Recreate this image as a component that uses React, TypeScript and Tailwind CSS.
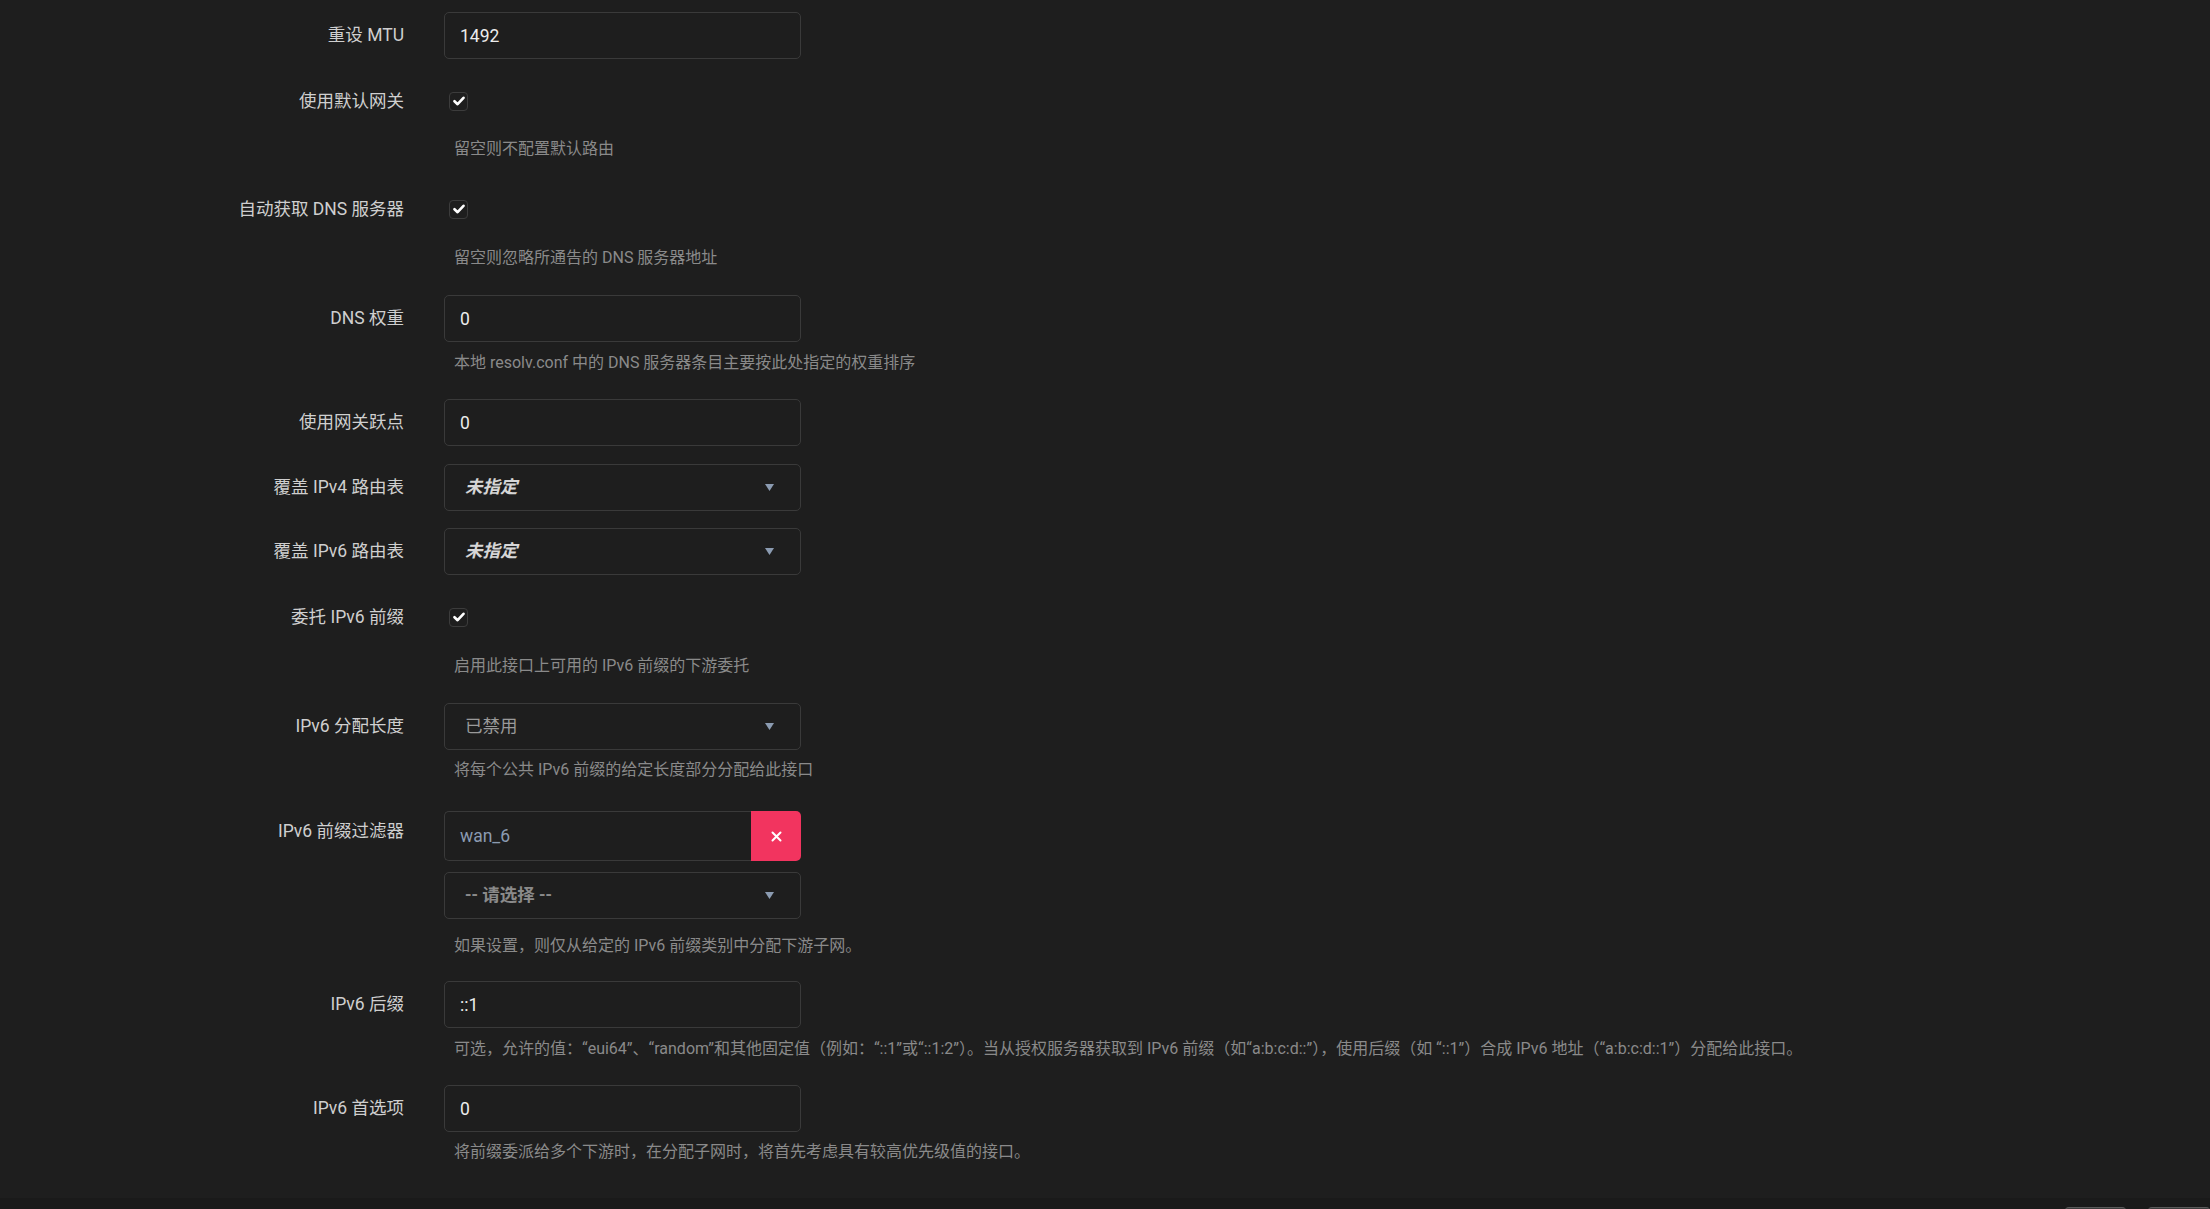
import React from 'react';

const font = "font-['Roboto','Noto_Sans_CJK_SC',sans-serif]";

function Row({ label, className, labelH, children }: { label: string; className: string; labelH?: string; children: React.ReactNode }) {
  return (
    <div className={`flex items-start ${className}`}>
      <div className={`w-[404px] shrink-0 flex items-center justify-end text-[17.5px] text-[#cfcfcf] whitespace-nowrap ${labelH ?? 'h-[47px]'}`}>
        {label}
      </div>
      <div className="ml-[40px] flex flex-col">{children}</div>
    </div>
  );
}

function TextBox({ value, h }: { value: string; h?: string }) {
  return (
    <input
      readOnly
      defaultValue={value}
      className={`w-[357px] ${h ?? 'h-[47px]'} rounded-[5px] border border-[#3a3a3a] bg-[#1e1e1e] pl-[15px] text-[17.5px] text-[#ececec] outline-none ${font}`}
    />
  );
}

function Arrow() {
  return (
    <svg width="9" height="7" viewBox="0 0 9 7">
      <path d="M0 0 H9 L4.5 7 Z" fill="#8b9bb1" />
    </svg>
  );
}

function SelectBox({ text, textClass }: { text: string; textClass: string }) {
  return (
    <div className="w-[357px] h-[47px] rounded-[5px] border border-[#3a3a3a] flex items-center justify-between pl-[20px] pr-[26px]">
      <span className={`text-[17.5px] ${textClass}`}>{text}</span>
      <Arrow />
    </div>
  );
}

function Check() {
  return (
    <div className="h-[48px] flex items-center">
      <div className="ml-[5px] w-[19px] h-[19px] rounded-[4px] border border-[#3c3c3c] flex items-center justify-center">
        <svg width="12" height="10" viewBox="0 0 12 10">
          <path d="M1.5 5.2 L4.6 8.2 L10.5 1.8" stroke="#ffffff" strokeWidth="2.6" fill="none" strokeLinecap="round" strokeLinejoin="round" />
        </svg>
      </div>
    </div>
  );
}

function Help({ children, className }: { children: React.ReactNode; className: string }) {
  return <div className={`pl-[10px] text-[16px] leading-[24px] text-[#8a8a8a] whitespace-nowrap ${className}`}>{children}</div>;
}

export default function App() {
  return (
    <div className={`min-h-screen bg-[#1e1e1e] ${font}`}>
      <div className="pt-[12px] pb-[34px]">
        <Row label="重设 MTU" className="">
          <TextBox value="1492" />
        </Row>

        <Row label="使用默认网关" className="mt-[18px]" labelH="h-[48px]">
          <Check />
          <Help className="mt-[12px]">留空则不配置默认路由</Help>
        </Row>

        <Row label="自动获取 DNS 服务器" className="mt-[24px]" labelH="h-[48px]">
          <Check />
          <Help className="mt-[13px]">留空则忽略所通告的 DNS 服务器地址</Help>
        </Row>

        <Row label="DNS 权重" className="mt-[25px]">
          <TextBox value="0" />
          <Help className="mt-[9px]">本地 resolv.conf 中的 DNS 服务器条目主要按此处指定的权重排序</Help>
        </Row>

        <Row label="使用网关跃点" className="mt-[24px]">
          <TextBox value="0" />
        </Row>

        <Row label="覆盖 IPv4 路由表" className="mt-[18px]">
          <SelectBox text="未指定" textClass="font-bold italic text-[#d6d6d6]" />
        </Row>

        <Row label="覆盖 IPv6 路由表" className="mt-[17px]">
          <SelectBox text="未指定" textClass="font-bold italic text-[#d6d6d6]" />
        </Row>

        <Row label="委托 IPv6 前缀" className="mt-[18px]" labelH="h-[48px]">
          <Check />
          <Help className="mt-[13px]">启用此接口上可用的 IPv6 前缀的下游委托</Help>
        </Row>

        <Row label="IPv6 分配长度" className="mt-[25px]">
          <SelectBox text="已禁用" textClass="text-[#9a9a9a]" />
          <Help className="mt-[8px]">将每个公共 IPv6 前缀的给定长度部分分配给此接口</Help>
        </Row>

        <Row label="IPv6 前缀过滤器" className="mt-[29px]" labelH="h-[40px]">
          <div className="flex w-[357px] h-[50px]">
            <div className="flex-1 rounded-l-[5px] border border-r-0 border-[#3a3a3a] flex items-center pl-[15px] text-[17.5px] text-[#8b9bb1]">
              wan_6
            </div>
            <div className="w-[50px] rounded-r-[5px] bg-[#f2345f] flex items-center justify-center">
              <svg width="11" height="11" viewBox="0 0 11 11">
                <path d="M1.5 1.5 L9.5 9.5 M9.5 1.5 L1.5 9.5" stroke="#ffffff" strokeWidth="2" strokeLinecap="round" />
              </svg>
            </div>
          </div>
          <div className="mt-[11px]">
            <SelectBox text="-- 请选择 --" textClass="font-semibold text-[#8a8a8a]" />
          </div>
          <Help className="mt-[15px]">如果设置，则仅从给定的 IPv6 前缀类别中分配下游子网。</Help>
        </Row>

        <Row label="IPv6 后缀" className="mt-[23px]">
          <TextBox value="::1" />
          <Help className="mt-[9px]">
            可选，允许的值：“eui64”、“random”和其他固定值（例如：“::1”或“::1:2”）。当从授权服务器获取到 IPv6 前缀（如“a:b:c:d::”），使用后缀（如 “::1”）合成 IPv6 地址（“a:b:c:d::1”）分配给此接口。
          </Help>
        </Row>

        <Row label="IPv6 首选项" className="mt-[24px]">
          <TextBox value="0" />
          <Help className="mt-[8px]">将前缀委派给多个下游时，在分配子网时，将首先考虑具有较高优先级值的接口。</Help>
        </Row>
      </div>

      <div className="bg-[#1a1a1a] pt-[9px] pb-[20px] flex justify-end gap-[22px]">
        <div className="w-[61px] h-[40px] rounded-[4px] bg-[#3b3b3b] border-t border-[#5a5a5a]" />
        <div className="w-[62px] h-[40px] rounded-[4px] bg-[#3b3b3b] border-t border-[#5a5a5a]" />
      </div>
    </div>
  );
}
